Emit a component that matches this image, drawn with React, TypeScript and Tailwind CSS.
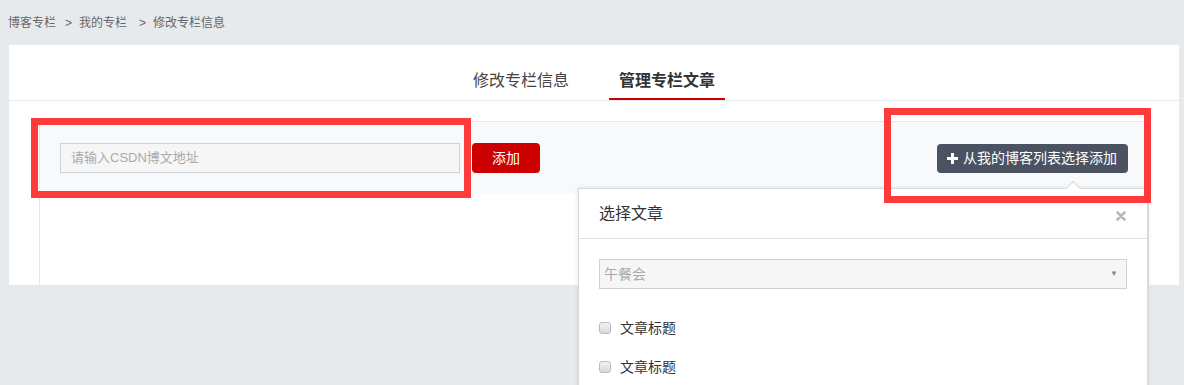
import React from 'react';

const font = "font-['Liberation_Sans','Noto_Sans_CJK_SC',sans-serif]";

const Checkbox: React.FC<{ label: string }> = ({ label }) => (
  <label className="flex items-center h-[20px] gap-[9px] text-sm text-[#333]">
    <span className="w-[12px] h-[12px] rounded-[3px] border border-[#b9bcc0] bg-gradient-to-b from-[#f4f4f4] to-[#d8d8d8]" />
    <span className="leading-[20px]">{label}</span>
  </label>
);

const App: React.FC = () => {
  return (
    <div className={`relative h-[385px] overflow-hidden bg-[#e6eaed] ${font}`}>
      <div className="h-[45px] flex items-center pl-[8px] text-xs text-[#666]">
        <span>博客专栏</span>
        <span className="ml-[9px] mr-[7px]">&gt;</span>
        <span>我的专栏</span>
        <span className="ml-[12px] mr-[7px]">&gt;</span>
        <span>修改专栏信息</span>
      </div>

      <div className="ml-[9px] w-[1170px] bg-white">
        <div className="h-[56px] flex justify-center items-end gap-[30px] border-b border-[#e6e9ec]">
          <div className="px-[10px] pb-[6px] border-b-2 border-transparent text-base leading-[22px] text-[#444]">
            修改专栏信息
          </div>
          <div className="px-[10px] pb-[6px] border-b-2 border-[#cc0000] text-base leading-[22px] font-bold text-[#333]">
            管理专栏文章
          </div>
        </div>

        <div className="px-[30px] pt-[20px]">
          <div className="border-x border-t border-[#e3e7ea]">
            <div className="h-[72px] bg-[#f8f9fb] flex items-center px-[20px]">
              <div className="w-[400px] h-[30px] bg-[#f6f6f6] border border-[#cdd2d7] flex items-center px-[10px] text-[13px] text-[#aaa]">
                请输入CSDN博文地址
              </div>
              <button className="ml-[12px] w-[68px] h-[30px] rounded-[4px] bg-[#cc0000] text-white text-sm">
                添加
              </button>
              <button className="ml-auto h-[29px] pl-[10px] pr-[11px] rounded-[4px] bg-[#4b5261] text-white text-sm flex items-center gap-[5px]">
                <svg width="11" height="11" viewBox="0 0 11 11" className="fill-white">
                  <rect x="4" y="0" width="3" height="11" />
                  <rect x="0" y="4" width="11" height="3" />
                </svg>
                <span>从我的博客列表选择添加</span>
              </button>
            </div>
            <div className="h-[91px] bg-white" />
          </div>
        </div>
      </div>

      <div className="absolute left-[578px] top-[188px] w-[570px] h-[220px] bg-white border border-[#d5dade] shadow-[0_0_4px_rgba(0,0,0,0.12)]">
        <div className="absolute -top-[6px] left-[489px] w-[10px] h-[10px] rotate-45 bg-white border-l border-t border-[#d5dade]" />
        <div className="relative h-[50px] px-[20px] flex items-center justify-between border-b border-[#dde1e5]">
          <span className="text-base text-[#333]">选择文章</span>
          <svg width="10" height="10" viewBox="0 0 10 10" className="stroke-[#b5b8bc] mr-[1px] mt-[4px]">
            <path d="M1.5 1.5 L8.5 8.5 M8.5 1.5 L1.5 8.5" strokeWidth="2.6" strokeLinecap="round" />
          </svg>
        </div>
        <div className="px-[20px] pt-[20px]">
          <div className="h-[30px] bg-[#f6f6f6] border border-[#cdd2d7] flex items-center justify-between pl-[4px] pr-[8px] text-sm text-[#aaa]">
            <span>午餐会</span>
            <span className="text-[8px] text-[#888]">▼</span>
          </div>
          <div className="mt-[29px] flex flex-col gap-[19px]">
            <Checkbox label="文章标题" />
            <Checkbox label="文章标题" />
          </div>
        </div>
      </div>

      <div className="absolute left-[31px] top-[118px] w-[440px] h-[80px] border-[7px] border-[#ff3a3a]" />
      <div className="absolute left-[884px] top-[108px] w-[267px] h-[95px] border-[7px] border-[#ff3a3a]" />
    </div>
  );
};

export default App;
